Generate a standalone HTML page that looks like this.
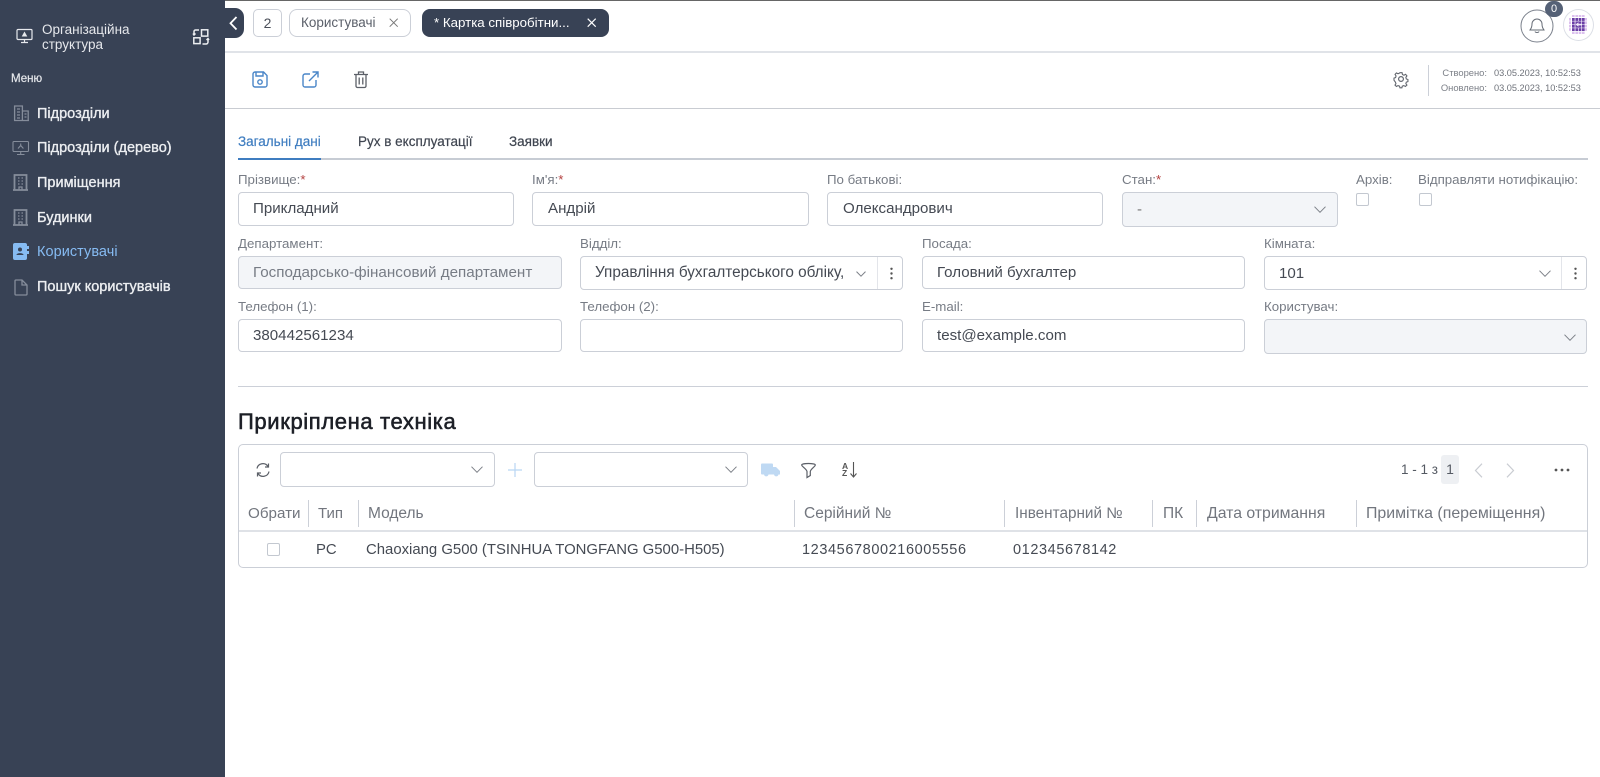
<!DOCTYPE html>
<html lang="uk"><head><meta charset="utf-8"><title>Картка співробітника</title>
<style>
html,body{margin:0;padding:0;width:1600px;height:777px;overflow:hidden;background:#fff;font-family:"Liberation Sans",sans-serif;color:#4a4f59}
.a{position:absolute}
.t{position:absolute;white-space:nowrap;line-height:20px;height:20px}
.side{position:absolute;left:0;top:0;width:225px;height:777px;background:#384255}
.m{color:#eceef1;font-size:14.5px;left:37px;-webkit-text-stroke:.35px #eceef1}
.l{font-size:13.3px;color:#777c85}
.l i{color:#b3403f;font-style:normal}
.b{position:absolute;box-sizing:border-box;border:1px solid #cbcfd7;border-radius:4px;background:#fff}
.g{background:#f3f5f8}
.v{font-size:15.1px;color:#454a53}
.h{font-size:15.5px;color:#72767e}
.s{position:absolute;width:1px;background:#ccd0d8;top:500px;height:27px}
.c{position:absolute;box-sizing:border-box;width:13px;height:13px;border:1px solid #c3c8d0;border-radius:2px;background:#fff}
.r{font-size:14.9px}
.n{font-size:14.5px;letter-spacing:.6px}
.tab{font-size:13.5px;color:#3f4550;-webkit-text-stroke:.2px #3f4550}
svg{position:absolute;fill:none;overflow:visible}
</style></head><body>
<div class="a" style="left:0;top:0;width:1600px;height:1px;background:#666"></div>

<div class="side"></div>
<svg style="left:16px;top:28px" width="18" height="16" stroke="#e6e8ec" stroke-width="1.2"><rect x="1" y="1.5" width="15" height="10" rx="1"/><path d="M8.5 11.5v3M5 14.500h7"/><path d="M8.500 3.500l2.800 5H5.700z" fill="#e6e8ec" stroke="none"/></svg>
<div class="t" style="left:42px;top:20px;font-size:13.5px;color:#e6e8ec">Організаційна</div>
<div class="t" style="left:42px;top:35px;font-size:13.5px;color:#e6e8ec">структура</div>
<svg style="left:193px;top:29px" width="16" height="16" stroke="#eceef1" stroke-width="1.5"><rect x="8.500" y=".8" width="6.300" height="6.300"/><rect x=".8" y="8.800" width="6.300" height="5.800"/><path d="M6 1H2.500A1.500 1.500 0 0 0 1 2.500V6M0 4.500L1 6l1.500-1.500M9.500 15H13a2 2 0 0 0 2-2V9.500M13.500 11l1.500-1.500L16 11"/></svg>
<div class="t" style="left:11px;top:69px;font-size:11.500px;color:#e6e8ec;-webkit-text-stroke:.2px #e6e8ec">Меню</div>

<svg style="left:14px;top:105px" width="15" height="16" stroke="#858d9b" stroke-width="1.300"><path d="M.6 15.500V1h7.800v14.500M8.400 6h5.800v9.500M0 15.500h15M3 4h3M3 7h3M3 10h3M3 13h3M10.500 9h2M10.500 12h2"/></svg>
<div class="t m" style="top:104px">Підрозділи</div>
<svg style="left:12px;top:140px" width="18" height="16" stroke="#858d9b" stroke-width="1.100"><rect x="1" y="1.500" width="15.500" height="10" rx="1"/><path d="M8.700 11.500v3M5 14.500h7.500M8.700 3.500v2M6 8.500l2.700-3 2.700 3"/></svg>
<div class="t m" style="top:138px">Підрозділи (дерево)</div>
<svg style="left:13px;top:174px" width="15" height="17" stroke="#858d9b" stroke-width="1.800"><path d="M1.500 16V1h12v15M0 16h15" /><path d="M5 4h1.500M8.500 4H10M5 7h1.500M8.500 7H10M5 10h1.500M8.500 10H10M6 16v-3h3v3" stroke-width="1.300"/></svg>
<div class="t m" style="top:173px">Приміщення</div>
<svg style="left:13px;top:209px" width="15" height="17" stroke="#858d9b" stroke-width="1.800"><path d="M1.500 16V1h12v15M0 16h15"/><path d="M5 4h1.500M8.500 4H10M5 7h1.500M8.500 7H10M5 10h1.500M8.500 10H10M6 16v-3h3v3" stroke-width="1.300"/></svg>
<div class="t m" style="top:208px">Будинки</div>
<div class="a" style="left:13px;top:243px;width:14px;height:17px;background:#86bbf2;border-radius:2px"></div>
<div class="a" style="left:27px;top:246px;width:2px;height:3px;background:#86bbf2"></div>
<div class="a" style="left:27px;top:251px;width:2px;height:3px;background:#86bbf2"></div>
<svg style="left:16px;top:247px" width="8" height="9"><circle cx="4" cy="2.500" r="2" fill="#384255"/><path d="M.500 8c0-2.500 7-2.500 7 0z" fill="#384255"/></svg>
<div class="t m" style="top:242px;color:#86bbf2;-webkit-text-stroke:0;letter-spacing:.05px">Користувачі</div>
<svg style="left:14px;top:279px" width="14" height="17" stroke="#858d9b" stroke-width="1.300"><path d="M1 2a1 1 0 0 1 1-1h6l5 5v9a1 1 0 0 1-1 1H2a1 1 0 0 1-1-1zM8 1v5h5"/></svg>
<div class="t m" style="top:277px">Пошук користувачів</div>

<div class="a" style="left:225px;top:8px;width:19px;height:30px;background:#384255;border-radius:0 9px 9px 0"></div>
<svg style="left:229px;top:16px" width="9" height="15" stroke="#fff" stroke-width="1.800"><path d="M7.500 1L1.500 7.300l6 6.200"/></svg>
<div class="b" style="left:253px;top:9px;width:29px;height:28px;border-radius:5px"></div>
<div class="t" style="left:253px;top:13px;width:29px;text-align:center;font-size:14px">2</div>
<div class="b" style="left:289px;top:9px;width:122px;height:28px;border-radius:8px"></div>
<div class="t" style="left:301px;top:13px;font-size:13.500px;color:#5b606a">Користувачі</div>
<svg style="left:389px;top:18px" width="10" height="10" stroke="#777" stroke-width="1"><path d="M.700.700l8 8M8.700.700l-8 8"/></svg>
<div class="a" style="left:422px;top:9px;width:187px;height:28px;background:#384255;border-radius:8px"></div>
<div class="t" style="left:434px;top:13px;font-size:13.300px;color:#fff">* Картка співробітни...</div>
<svg style="left:587px;top:18px" width="10" height="10" stroke="#fff" stroke-width="1.200"><path d="M.700.700l8 8M8.700.700l-8 8"/></svg>

<svg style="left:1520px;top:9px" width="34" height="34"><circle cx="17" cy="17" r="16" stroke="#7b818c" stroke-width="1"/><path d="M17 10a5 5 0 0 0-5 5c0 4-1.500 5-2 6h14c-.500-1-2-2-2-6a5 5 0 0 0-5-5zM15 22.500c.500 1.300 3.500 1.300 4 0" stroke="#666c76" stroke-width="1"/></svg>
<div class="a" style="left:1545px;top:1px;width:18px;height:16px;background:#556176;border-radius:8px;color:#fff;font-size:11px;line-height:16px;text-align:center">0</div>
<div class="a" style="left:1563px;top:9px;width:31px;height:32px;border:1px solid #dcdfe6;border-radius:50%;box-sizing:border-box"></div>
<svg style="left:1569px;top:15px" width="18" height="19">
<g fill="#dcc0ee"><rect x="3" y="0" width="2.600" height="2"/><rect x="6.400" y="0" width="2.600" height="2"/><rect x="9.700" y="0" width="2.600" height="2"/><rect x="13" y="0" width="2.600" height="2"/><rect x="3" y="17" width="2.600" height="2"/><rect x="6.400" y="17" width="2.600" height="2"/><rect x="9.700" y="17" width="2.600" height="2"/><rect x="13" y="17" width="2.600" height="2"/><rect x="0" y="3" width="2" height="2.600"/><rect x="0" y="6.400" width="2" height="2.600"/><rect x="0" y="9.800" width="2" height="2.600"/><rect x="0" y="13.200" width="2" height="2.600"/><rect x="16" y="3" width="2" height="2.600"/><rect x="16" y="6.400" width="2" height="2.600"/><rect x="16" y="9.800" width="2" height="2.600"/><rect x="16" y="13.200" width="2" height="2.600"/></g>
<g fill="#6a3ea6"><rect x="3" y="3" width="2.700" height="2.900"/><rect x="6.400" y="3" width="2.700" height="2.900"/><rect x="9.700" y="3" width="2.700" height="2.900"/><rect x="13" y="3" width="2.700" height="2.900"/><rect x="3" y="6.400" width="2.700" height="2.900"/><rect x="13" y="6.400" width="2.700" height="2.900"/><rect x="3" y="9.800" width="2.700" height="2.900"/><rect x="13" y="9.800" width="2.700" height="2.900"/><rect x="3" y="13.200" width="2.700" height="2.900"/><rect x="6.400" y="13.200" width="2.700" height="2.900"/><rect x="9.700" y="13.200" width="2.700" height="2.900"/><rect x="13" y="13.200" width="2.700" height="2.900"/><rect x="6.400" y="6.400" width="6" height="6.300"/></g>
<path d="M6.500 9.500l3-2.200v1.400h3v1.700h-3v1.400z" fill="#efe6f7"/></svg>

<div class="a" style="left:225px;top:51px;width:1375px;height:2px;background:#e0e3e8"></div>
<svg style="left:252px;top:71px" width="16" height="17" stroke="#4a86c8" stroke-width="1.400"><path d="M1 3a2 2 0 0 1 2-2h8.500L15 4.500V14a2 2 0 0 1-2 2H3a2 2 0 0 1-2-2zM4 1v4h7V1"/><circle cx="8" cy="11" r="2.200"/></svg>
<svg style="left:302px;top:71px" width="17" height="17" stroke="#4a86c8" stroke-width="1.400"><path d="M8 3H3a2 2 0 0 0-2 2v9a2 2 0 0 0 2 2h9a2 2 0 0 0 2-2V9M7 10L16 1M10.500 1H16v5.500"/></svg>
<svg style="left:354px;top:71px" width="14" height="17" stroke="#5c6068" stroke-width="1.300"><path d="M0 3.500h14M4.500 3.500V1h5v2.500M2 3.500V15a1.500 1.500 0 0 0 1.500 1.500h7A1.500 1.500 0 0 0 12 15V3.500M5.200 6.500v7M8.800 6.500v7"/></svg>

<svg style="left:1393px;top:71px" width="16" height="16" stroke="#62666e" stroke-width="1.200"><circle cx="8" cy="8" r="2.400"/><path d="M6.800 1h2.400l.4 2 1.700.8 1.800-1 1.500 1.700-1.200 1.700.5 1.800 1.800.6v2.300l-1.800.6-.5 1.700 1.200 1.500-1.700 1.600-1.800-1-1.700.7-.4 1.800H6.800l-.4-1.800-1.700-.7-1.800 1-1.600-1.600 1.100-1.500-.6-1.700L.2 9.300V7l1.800-.6.500-1.800-1.100-1.700 1.500-1.700 1.800 1 1.700-.8z" transform="translate(.8 .8) scale(.9)"/></svg>
<div class="a" style="left:1428px;top:65px;width:1px;height:31px;background:#ccd0d8"></div>
<div class="t" style="left:1400px;width:87px;top:63px;text-align:right;font-size:9.400px;color:#7b7f87">Створено:</div>
<div class="t" style="left:1400px;width:87px;top:78px;text-align:right;font-size:9.400px;color:#7b7f87">Оновлено:</div>
<div class="t" style="left:1494px;top:63px;font-size:9.200px;color:#6f737b">03.05.2023, 10:52:53</div>
<div class="t" style="left:1494px;top:78px;font-size:9.200px;color:#6f737b">03.05.2023, 10:52:53</div>
<div class="a" style="left:225px;top:108px;width:1375px;height:1px;background:#c9ccd2"></div>

<div class="t" style="left:238px;top:132px;font-size:13.500px;color:#3f7dc0;-webkit-text-stroke:.2px #3f7dc0">Загальні дані</div>
<div class="t tab" style="left:358px;top:132px">Рух в експлуатації</div>
<div class="t tab" style="left:509px;top:132px">Заявки</div>
<div class="a" style="left:238px;top:158px;width:1350px;height:2px;background:#c7ccd4"></div>
<div class="a" style="left:238px;top:158px;width:83px;height:2px;background:#3f7dc0"></div>

<div class="t l" style="left:238px;top:170px">Прізвище:<i>*</i></div>
<div class="t l" style="left:532px;top:170px">Ім'я:<i>*</i></div>
<div class="t l" style="left:827px;top:170px">По батькові:</div>
<div class="t l" style="left:1122px;top:170px">Стан:<i>*</i></div>
<div class="t l" style="left:1356px;top:170px">Архів:</div>
<div class="t l" style="left:1418px;top:170px">Відправляти нотифікацію:</div>
<div class="b" style="left:238px;top:192px;width:276px;height:34px"></div>
<div class="t v" style="left:253px;top:199px">Прикладний</div>
<div class="b" style="left:532px;top:192px;width:277px;height:34px"></div>
<div class="t v" style="left:548px;top:199px">Андрій</div>
<div class="b" style="left:827px;top:192px;width:276px;height:34px"></div>
<div class="t v" style="left:843px;top:199px">Олександрович</div>
<div class="b g" style="left:1122px;top:192px;width:216px;height:35px"></div>
<div class="t v" style="left:1137px;top:200px;color:#777">-</div>
<svg style="left:1314px;top:206px" width="12" height="7" stroke="#7b7f87" stroke-width="1"><path d="M.500.700L6 6.300 11.500.700"/></svg>
<div class="c" style="left:1356px;top:193px"></div>
<div class="c" style="left:1419px;top:193px"></div>

<div class="t l" style="left:238px;top:234px">Департамент:</div>
<div class="t l" style="left:580px;top:234px">Відділ:</div>
<div class="t l" style="left:922px;top:234px">Посада:</div>
<div class="t l" style="left:1264px;top:234px">Кімната:</div>
<div class="b g" style="left:238px;top:256px;width:324px;height:33px"></div>
<div class="t v" style="left:253px;top:263px;color:#777c85;font-size:15.2px">Господарсько-фінансовий департамент</div>
<div class="b" style="left:580px;top:256px;width:323px;height:34px"></div>
<div class="t v" style="left:595px;top:263px;width:253px;overflow:hidden;font-size:15.3px">Управління бухгалтерського обліку,</div>
<svg style="left:856px;top:271px" width="10" height="6" stroke="#7b7f87" stroke-width="1"><path d="M.500.600L5 5.200 9.500.600"/></svg>
<div class="a" style="left:877px;top:257px;width:1px;height:32px;background:#e3e5ea"></div>
<svg style="left:890px;top:267px" width="3" height="13"><circle cx="1.500" cy="1.800" r="1.200" fill="#555"/><circle cx="1.500" cy="6.500" r="1.200" fill="#555"/><circle cx="1.500" cy="11.200" r="1.200" fill="#555"/></svg>
<div class="b" style="left:922px;top:256px;width:323px;height:33px"></div>
<div class="t v" style="left:937px;top:263px">Головний бухгалтер</div>
<div class="b" style="left:1264px;top:256px;width:323px;height:34px"></div>
<div class="t v" style="left:1279px;top:264px">101</div>
<svg style="left:1539px;top:270px" width="12" height="7" stroke="#7b7f87" stroke-width="1"><path d="M.500.700L6 6.300 11.500.700"/></svg>
<div class="a" style="left:1561px;top:257px;width:1px;height:32px;background:#e3e5ea"></div>
<svg style="left:1574px;top:267px" width="3" height="13"><circle cx="1.500" cy="1.800" r="1.200" fill="#555"/><circle cx="1.500" cy="6.500" r="1.200" fill="#555"/><circle cx="1.500" cy="11.200" r="1.200" fill="#555"/></svg>

<div class="t l" style="left:238px;top:297px">Телефон (1):</div>
<div class="t l" style="left:580px;top:297px">Телефон (2):</div>
<div class="t l" style="left:922px;top:297px">E-mail:</div>
<div class="t l" style="left:1264px;top:297px">Користувач:</div>
<div class="b" style="left:238px;top:319px;width:324px;height:33px"></div>
<div class="t v" style="left:253px;top:326px">380442561234</div>
<div class="b" style="left:580px;top:319px;width:323px;height:33px"></div>
<div class="b" style="left:922px;top:319px;width:323px;height:33px"></div>
<div class="t v" style="left:937px;top:326px">test@example.com</div>
<div class="b g" style="left:1264px;top:319px;width:323px;height:35px"></div>
<svg style="left:1564px;top:334px" width="12" height="7" stroke="#7b7f87" stroke-width="1"><path d="M.500.700L6 6.300 11.500.700"/></svg>

<div class="a" style="left:238px;top:386px;width:1350px;height:1px;background:#ccd0d8"></div>
<div class="t" style="left:238px;top:412px;font-size:22px;letter-spacing:.62px;color:#1c1f26;-webkit-text-stroke:.55px #1c1f26">Прикріплена техніка</div>

<div class="b" style="left:238px;top:444px;width:1350px;height:124px;border-radius:5px"></div>
<svg style="left:255px;top:462px" width="16" height="16" stroke="#5c6068" stroke-width="1.200"><path d="M2 6.500A6 6 0 0 1 13 4.500M14 9.500A6 6 0 0 1 3 11.500M13.500 1.500v3.500H10M2.500 14.500V11H6"/></svg>
<div class="b" style="left:280px;top:452px;width:215px;height:35px"></div>
<svg style="left:471px;top:466px" width="12" height="7" stroke="#7b7f87" stroke-width="1"><path d="M.500.700L6 6.300 11.500.700"/></svg>
<svg style="left:508px;top:463px" width="14" height="14" stroke="#b9d6f3" stroke-width="1.200"><path d="M7 0v14M0 7h14"/></svg>
<div class="b" style="left:534px;top:452px;width:214px;height:35px"></div>
<svg style="left:725px;top:466px" width="12" height="7" stroke="#7b7f87" stroke-width="1"><path d="M.500.700L6 6.300 11.500.700"/></svg>
<svg style="left:761px;top:463px" width="19" height="14"><path d="M0 1.500A1 1 0 0 1 1 .500h10a1 1 0 0 1 1 1V4h3L19 8v3.500h-1.500a2.300 2.300 0 0 1-4.500 0H7.500a2.300 2.300 0 0 1-4.500 0H1a1 1 0 0 1-1-1z" fill="#bfd9f3"/></svg>
<svg style="left:801px;top:463px" width="15" height="15" stroke="#5c6068" stroke-width="1.200"><path d="M.700 2C.700 0 14.300 0 14.300 2c0 1.500-4.800 4-5 6.500v4L6 14.500v-6C5.700 6 .700 3.500.700 2z"/></svg>
<div class="t" style="left:842px;top:462px;font-size:8.500px;font-weight:bold;line-height:8px;height:8px;color:#555">A</div>
<div class="t" style="left:842px;top:469px;font-size:8.500px;font-weight:bold;line-height:8px;height:8px;color:#555">Z</div>
<svg style="left:850px;top:462px" width="8" height="16" stroke="#555" stroke-width="1.100"><path d="M3.500 0v15M.500 11.500L3.500 15l3-3.500"/></svg>

<div class="t" style="left:1401px;top:460px;font-size:13.500px;color:#555a63">1 - 1 з</div>
<div class="a" style="left:1441px;top:455px;width:18px;height:29px;background:#eef0f3;border-radius:3px;font-size:14px;line-height:29px;text-align:center;color:#555a63">1</div>
<svg style="left:1474px;top:463px" width="9" height="15" stroke="#c9ccd2" stroke-width="1.200"><path d="M8 .700L1.500 7.500 8 14.300"/></svg>
<svg style="left:1506px;top:463px" width="9" height="15" stroke="#c9ccd2" stroke-width="1.200"><path d="M1 .700l6.500 6.800L1 14.300"/></svg>
<svg style="left:1554px;top:468px" width="16" height="4"><circle cx="2" cy="2" r="1.400" fill="#555"/><circle cx="8" cy="2" r="1.400" fill="#555"/><circle cx="14" cy="2" r="1.400" fill="#555"/></svg>

<div class="t h" style="left:248px;top:504px;font-size:15.2px">Обрати</div>
<div class="s" style="left:308px"></div>
<div class="t h" style="left:318px;top:504px;font-size:15px">Тип</div>
<div class="s" style="left:358px"></div>
<div class="t h" style="left:368px;top:504px">Модель</div>
<div class="s" style="left:794px"></div>
<div class="t h" style="left:804px;top:504px">Серійний №</div>
<div class="s" style="left:1004px"></div>
<div class="t h" style="left:1015px;top:504px;font-size:15.3px">Інвентарний №</div>
<div class="s" style="left:1152px"></div>
<div class="t h" style="left:1163px;top:504px">ПК</div>
<div class="s" style="left:1196px"></div>
<div class="t h" style="left:1207px;top:504px;font-size:15.8px">Дата отримання</div>
<div class="s" style="left:1356px"></div>
<div class="t h" style="left:1366px;top:504px;font-size:15.9px">Примітка (переміщення)</div>
<div class="a" style="left:239px;top:530px;width:1348px;height:2px;background:#dfe2e7"></div>

<div class="c" style="left:267px;top:543px"></div>
<div class="t v r" style="left:316px;top:540px">PC</div>
<div class="t v r" style="left:366px;top:540px">Chaoxiang G500 (TSINHUA TONGFANG G500-H505)</div>
<div class="t v n" style="left:802px;top:540px">1234567800216005556</div>
<div class="t v n" style="left:1013px;top:540px">012345678142</div>
</body></html>
